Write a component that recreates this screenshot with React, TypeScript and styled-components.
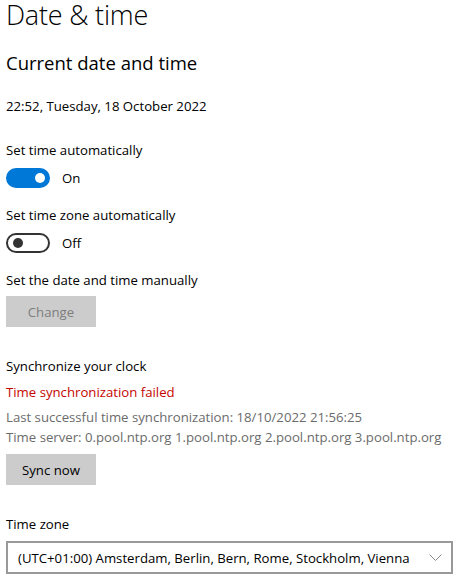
import React from "react";
import styled, { createGlobalStyle } from "styled-components";

const Global = createGlobalStyle`
  html, body { margin: 0; padding: 0; background: #fff; }
  body { font-family: "Open Sans", "Noto Sans", sans-serif; color: #000; }
`;

const Page = styled.div`
  padding: 0 6px;
  width: 460px;
  height: 579px;
  box-sizing: border-box;
  overflow: hidden;
`;

const Title = styled.h1`
  margin: 0;
  font-size: 27px;
  font-weight: 300;
  line-height: 30px;
  letter-spacing: -0.2px;
`;

const Subtitle = styled.h2`
  margin: 19px 0 0;
  font-size: 18.5px;
  font-weight: 400;
  line-height: 28px;
`;

const Text = styled.div<{ $top?: number; $tone?: "normal" | "muted" | "error" }>`
  margin-top: ${(p) => p.$top ?? 0}px;
  font-size: 13.2px;
  line-height: 20px;
  color: ${(p) => (p.$tone === "muted" ? "#6b6b6b" : p.$tone === "error" ? "#c50500" : "#000")};
`;

const ToggleRow = styled.div`
  display: flex;
  align-items: center;
  gap: 12px;
  margin-top: 8px;
  height: 20px;
  font-size: 13.2px;
`;

const Track = styled.div<{ $on: boolean }>`
  width: 44px;
  height: 20px;
  box-sizing: border-box;
  border-radius: 10px;
  position: relative;
  background: ${(p) => (p.$on ? "#0078d7" : "#fff")};
  border: 2px solid ${(p) => (p.$on ? "#0078d7" : "#333")};
`;

const Knob = styled.div<{ $on: boolean }>`
  position: absolute;
  top: 3px;
  left: ${(p) => (p.$on ? "27px" : "5px")};
  width: 10px;
  height: 10px;
  border-radius: 50%;
  background: ${(p) => (p.$on ? "#fff" : "#333")};
`;

const Button = styled.button<{ $disabled?: boolean; $top: number }>`
  display: block;
  margin-top: ${(p) => p.$top}px;
  width: 90px;
  height: 31px;
  border: none;
  padding: 0;
  background: #ccc;
  font-family: inherit;
  font-size: 13.2px;
  color: ${(p) => (p.$disabled ? "#7d7d7d" : "#000")};
`;

const Select = styled.div`
  margin-top: 7px;
  width: 447px;
  height: 33px;
  box-sizing: border-box;
  border: 2px solid #999;
  display: flex;
  align-items: center;
  justify-content: space-between;
  padding: 0 9px 0 10px;
  font-size: 13.2px;
`;

function Toggle({ on, label }: { on: boolean; label: string }) {
  return (
    <ToggleRow>
      <Track $on={on}>
        <Knob $on={on} />
      </Track>
      <span>{label}</span>
    </ToggleRow>
  );
}

export default function App() {
  return (
    <>
      <Global />
      <Page>
        <Title>Date &amp; time</Title>
        <Subtitle>Current date and time</Subtitle>
        <Text $top={19}>22:52, Tuesday, 18 October 2022</Text>
        <Text $top={24}>Set time automatically</Text>
        <Toggle on label="On" />
        <Text $top={17}>Set time zone automatically</Text>
        <Toggle on={false} label="Off" />
        <Text $top={17}>Set the date and time manually</Text>
        <Button $disabled $top={6}>Change</Button>
        <Text $top={29}>Synchronize your clock</Text>
        <Text $top={6} $tone="error">Time synchronization failed</Text>
        <Text $top={5} $tone="muted">Last successful time synchronization: 18/10/2022 21:56:25</Text>
        <Text $tone="muted">Time server: 0.pool.ntp.org 1.pool.ntp.org 2.pool.ntp.org 3.pool.ntp.org</Text>
        <Button $top={7}>Sync now</Button>
        <Text $top={29}>Time zone</Text>
        <Select>
          <span>(UTC+01:00) Amsterdam, Berlin, Bern, Rome, Stockholm, Vienna</span>
          <svg width="13" height="7" viewBox="0 0 13 7">
            <path d="M0.5 0.5 L6.5 6.5 L12.5 0.5" fill="none" stroke="#888" strokeWidth="1" />
          </svg>
        </Select>
      </Page>
    </>
  );
}
